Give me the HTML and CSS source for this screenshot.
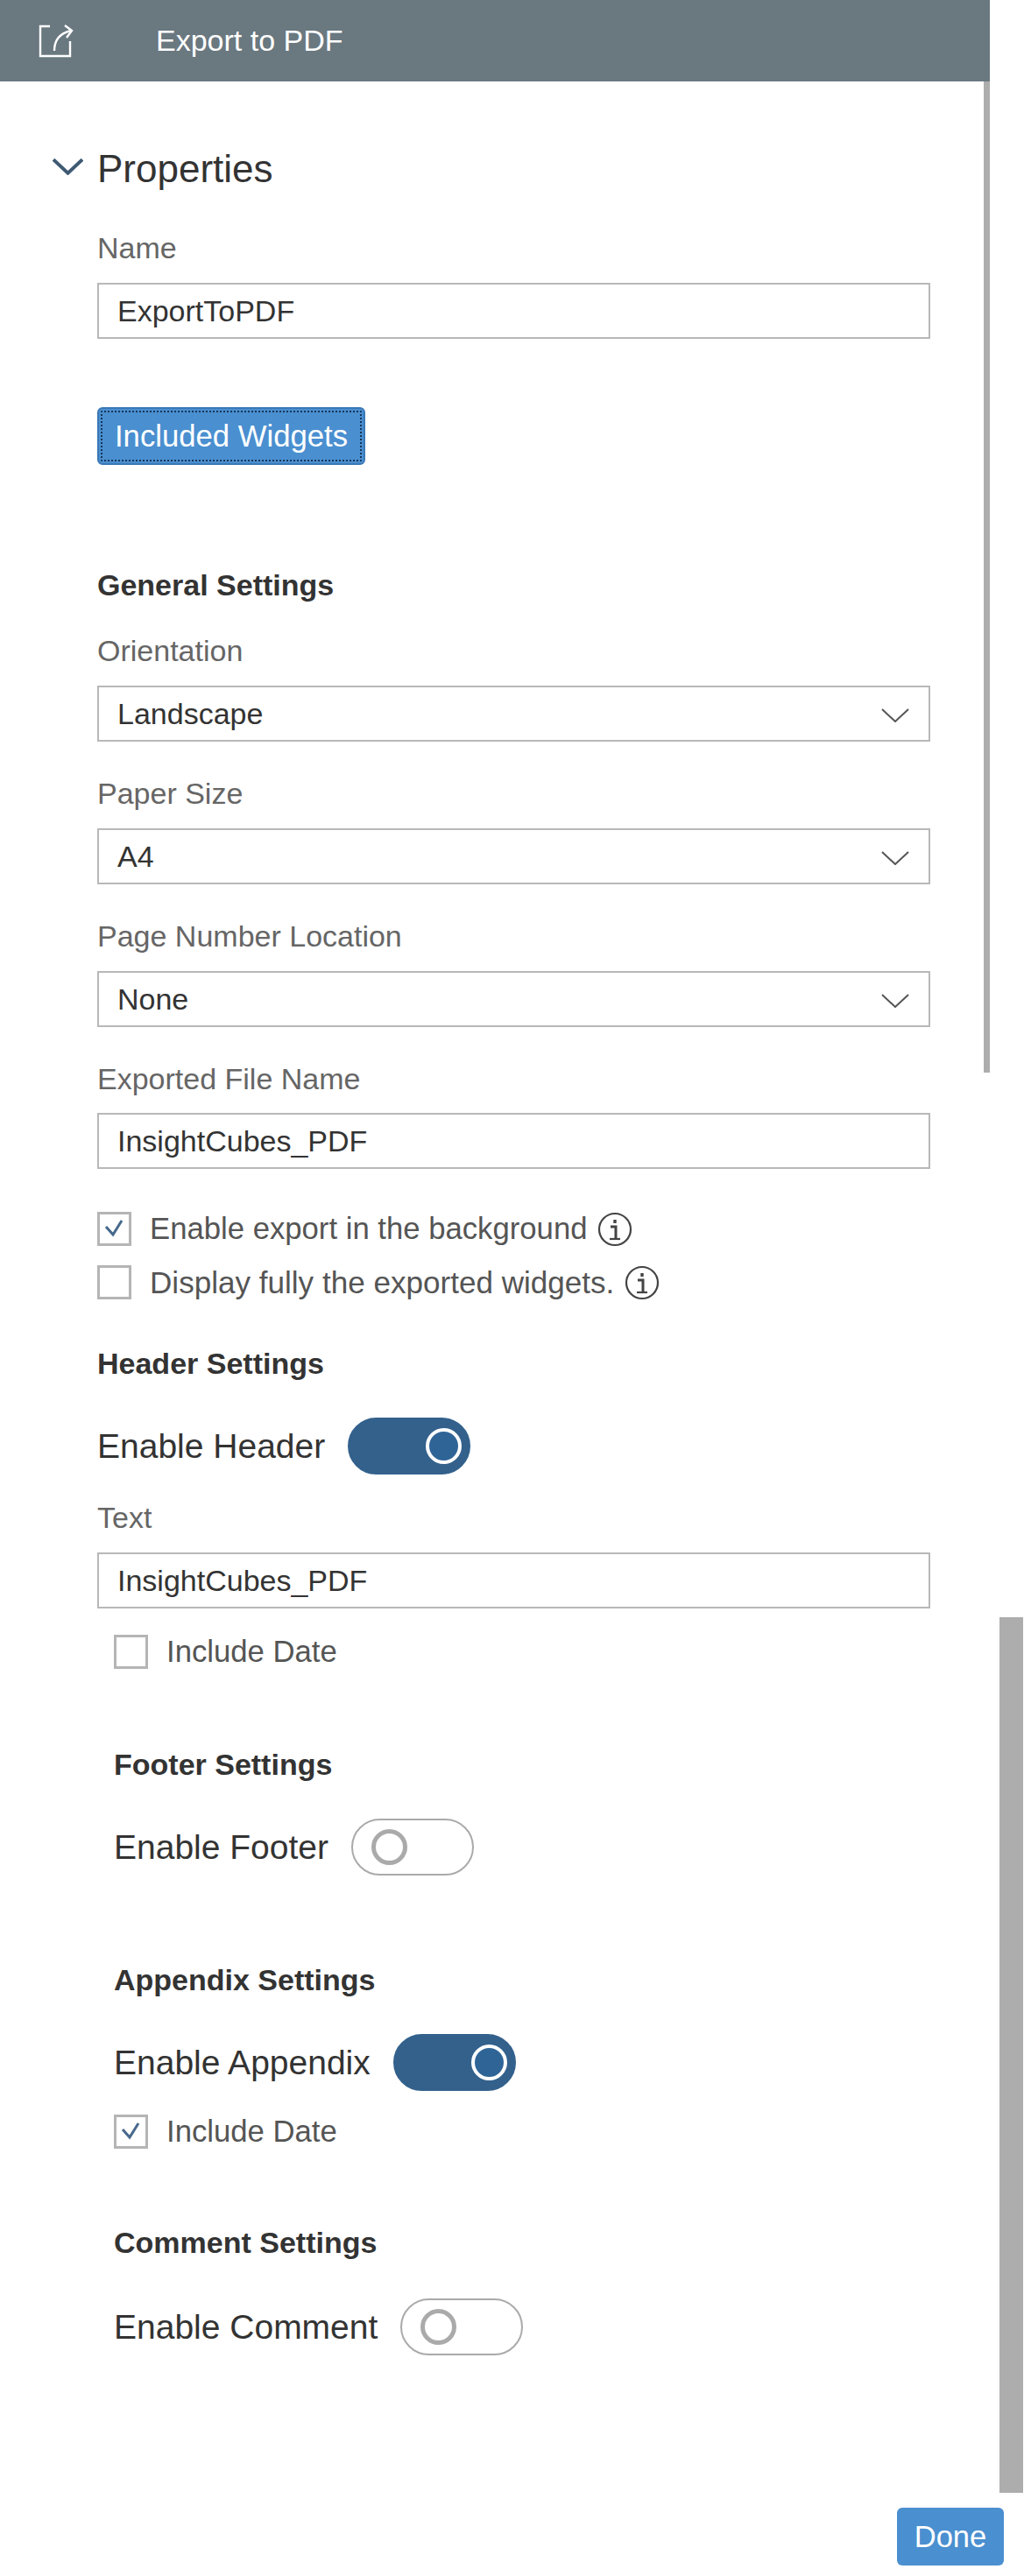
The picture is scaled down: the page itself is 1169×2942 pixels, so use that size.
FILE: index.html
```html
<!DOCTYPE html>
<html lang="en">

<head>
    <title>Export to PDF</title>
    <meta charset="UTF-8">
    <link rel="stylesheet" href="styles.css">
</head>

<body>
<div class="panel">
    <!-- title bar -->
    <div class="title-bar">
        <svg class="export-icon" viewBox="0 0 40 40" fill="none" stroke="#fff" stroke-width="2.4">
            <path d="M13 3H2V37H36V20"/>
            <path d="M18 31C18 19 24 11 37 8"/>
            <path d="M30 2L38 8L32 16"/>
        </svg>
        <span class="title-text">Export to PDF</span>
    </div>

    <div class="panel-body">
        <div class="props-head">
            <svg class="chevron" viewBox="0 0 36 20" fill="none" stroke="#3f5a73" stroke-width="4">
                <path d="M1 2L18 18L35 2"/>
            </svg>
            <span>Properties</span>
        </div>

        <div class="label name-label">Name</div>
        <div class="field">ExportToPDF</div>

        <button class="widgets-btn" type="button">Included Widgets</button>

        <div class="group-title general-title">General Settings</div>

        <div class="label orient-label">Orientation</div>
        <div class="field select">Landscape
            <svg class="select-arrow" viewBox="0 0 32 16" fill="none" stroke="#555" stroke-width="2"><path d="M1 1L16 15L31 1"/></svg>
        </div>

        <div class="label">Paper Size</div>
        <div class="field select">A4
            <svg class="select-arrow" viewBox="0 0 32 16" fill="none" stroke="#555" stroke-width="2"><path d="M1 1L16 15L31 1"/></svg>
        </div>

        <div class="label">Page Number Location</div>
        <div class="field select">None
            <svg class="select-arrow" viewBox="0 0 32 16" fill="none" stroke="#555" stroke-width="2"><path d="M1 1L16 15L31 1"/></svg>
        </div>

        <div class="label">Exported File Name</div>
        <div class="field file-field">InsightCubes_PDF</div>

        <div class="check-row first-check">
            <span class="check-box">
                <svg viewBox="0 0 33 33" fill="none" stroke="#46698c" stroke-width="3"><path d="M7 14L15 23L25 7"/></svg>
            </span>
            <span>Enable export in the background</span>
            <svg class="info-icon" viewBox="0 0 40 40" fill="none" stroke="#444" stroke-width="2.2">
                <circle cx="20" cy="20" r="18"/>
                <path d="M20 9V13" stroke-width="3.4"/>
                <path d="M15 17H21V31" stroke-width="3"/>
                <path d="M14 31H26"/>
            </svg>
        </div>
        <div class="check-row second-check">
            <span class="check-box"></span>
            <span>Display fully the exported widgets.</span>
            <svg class="info-icon" viewBox="0 0 40 40" fill="none" stroke="#444" stroke-width="2.2">
                <circle cx="20" cy="20" r="18"/>
                <path d="M20 9V13" stroke-width="3.4"/>
                <path d="M15 17H21V31" stroke-width="3"/>
                <path d="M14 31H26"/>
            </svg>
        </div>

        <div class="group-title header-title">Header Settings</div>
        <div class="toggle-row">
            <span>Enable Header</span>
            <span class="toggle on"><i></i></span>
        </div>
        <div class="label text-label">Text</div>
        <div class="field">InsightCubes_PDF</div>

        <div class="indented">
            <div class="check-row date-check">
                <span class="check-box"></span>
                <span>Include Date</span>
            </div>

            <div class="group-title footer-title">Footer Settings</div>
            <div class="toggle-row">
                <span>Enable Footer</span>
                <span class="toggle"><i></i></span>
            </div>

            <div class="group-title appendix-title">Appendix Settings</div>
            <div class="toggle-row">
                <span>Enable Appendix</span>
                <span class="toggle on"><i></i></span>
            </div>
            <div class="check-row appendix-check">
                <span class="check-box">
                    <svg viewBox="0 0 33 33" fill="none" stroke="#46698c" stroke-width="3"><path d="M7 14L15 23L25 7"/></svg>
                </span>
                <span>Include Date</span>
            </div>

            <div class="group-title comment-title">Comment Settings</div>
            <div class="toggle-row comment-row">
                <span>Enable Comment</span>
                <span class="toggle"><i></i></span>
            </div>
        </div>
    </div>
</div>

<div class="panel-footer">
    <button class="done-btn" type="button">Done</button>
</div>

<!-- scrollbars sit on top of the panel -->
<div class="inner-scroll"></div>
<div class="outer-scroll"></div>
</body>

</html>
```

FILE: styles.css
```css
body {
    margin: 0;
    padding: 0;
    background-color: #ffffff;
    font-family: 'Liberation Sans', Arial, sans-serif;
    font-size: 34px;
    color: #333333;
    position: relative;
    height: 2942px;
    overflow: hidden;
}

.panel {
    width: 1130px;
}

/* title bar */
.title-bar {
    height: 93px;
    background-color: #6a7880;
    display: flex;
    align-items: center;
    padding-left: 44px;
    color: #ffffff;
}

.export-icon {
    width: 40px;
    height: 40px;
    margin-right: 94px;
}

.title-text {
    font-size: 34px;
}

.panel-body {
    padding-left: 111px;
    width: 951px;
}

.props-head {
    display: flex;
    align-items: center;
    height: 50px;
    margin-top: 75px;
    margin-left: -51px;
    font-size: 44px;
}

.chevron {
    width: 35px;
    height: 20px;
    margin-right: 16px;
    margin-top: -6px;
}

/* labels and inputs */
.label {
    height: 40px;
    line-height: 40px;
    color: #666666;
    margin-top: 39px;
}

.name-label {
    margin-top: 45px;
}

.orient-label {
    margin-top: 35px;
}

.text-label {
    margin-top: 29px;
}

.field {
    box-sizing: border-box;
    height: 64px;
    line-height: 60px;
    margin-top: 20px;
    padding-left: 21px;
    border: 2px solid #b8b8b8;
    background-color: #ffffff;
    position: relative;
}

.file-field {
    margin-top: 19px;
}

.select-arrow {
    position: absolute;
    right: 22px;
    top: 24px;
    width: 32px;
    height: 16px;
}

.widgets-btn {
    display: block;
    width: 306px;
    height: 66px;
    margin-top: 78px;
    padding: 0;
    border: 2px solid #3a78b5;
    border-radius: 6px;
    background-color: #4a8fd0;
    color: #ffffff;
    font-family: inherit;
    font-size: 34.7px;
    outline: 2px dotted #16365a;
    outline-offset: -6px;
}

.group-title {
    height: 40px;
    line-height: 40px;
    font-weight: 700;
    color: #333333;
}

.general-title {
    margin-top: 117px;
}

.header-title {
    margin-top: 53px;
}

.footer-title {
    margin-top: 89px;
}

.appendix-title {
    margin-top: 99px;
}

.comment-title {
    margin-top: 87px;
}

/* checkboxes */
.check-row {
    display: flex;
    align-items: center;
    height: 39px;
    font-size: 34.7px;
    color: #555555;
}

.first-check {
    margin-top: 49px;
}

.second-check {
    margin-top: 22px;
    font-size: 35.1px;
}

.date-check {
    margin-top: 30px;
}

.appendix-check {
    margin-top: 27px;
}

.check-box {
    box-sizing: border-box;
    width: 39px;
    height: 39px;
    margin-right: 21px;
    border: 3px solid #b5b5b5;
    flex-shrink: 0;
}

.check-box svg {
    display: block;
    width: 33px;
    height: 33px;
}

.info-icon {
    width: 40px;
    height: 40px;
    margin-left: 12px;
}

/* toggles */
.toggle-row {
    display: flex;
    align-items: center;
    height: 65px;
    margin-top: 42px;
    font-size: 39px;
    color: #333333;
}

.comment-row {
    margin-top: 44px;
}

.toggle {
    box-sizing: border-box;
    display: flex;
    align-items: center;
    width: 140px;
    height: 65px;
    margin-left: 26px;
    border: 2px solid #aaaaaa;
    border-radius: 33px;
    background-color: #ffffff;
    padding-left: 21px;
}

.toggle i {
    box-sizing: border-box;
    display: block;
    width: 41px;
    height: 41px;
    border: 5px solid #aaaaaa;
    border-radius: 50%;
}

.toggle.on {
    border-color: #33618c;
    background-color: #33618c;
    justify-content: flex-end;
    padding-left: 0;
    padding-right: 8px;
}

.toggle.on i {
    border-width: 4px;
    border-color: #ffffff;
    background-color: #2f6497;
}

.indented {
    padding-left: 19px;
}

/* bottom bar */
.panel-footer {
    display: flex;
    justify-content: flex-end;
    padding-right: 23px;
    margin-top: 174px;
}

.done-btn {
    width: 122px;
    height: 66px;
    padding: 0;
    border: none;
    border-radius: 6px;
    background-color: #4a8fd0;
    color: #ffffff;
    font-family: inherit;
    font-size: 34.5px;
}

/* scrollbars */
.inner-scroll {
    position: absolute;
    left: 1123px;
    top: 93px;
    width: 7px;
    height: 1132px;
    background-color: #adadad;
}

.outer-scroll {
    position: absolute;
    left: 1141px;
    top: 1847px;
    width: 27px;
    height: 1000px;
    background-color: #adadad;
}
```
